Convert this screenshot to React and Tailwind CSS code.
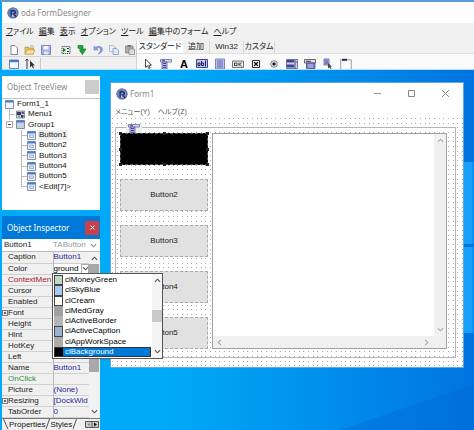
import React from "react";

const JP = "font-['Liberation_Sans','Noto_Sans_CJK_JP',sans-serif] [font-feature-settings:'palt']";

function Logo() {
  return (
    <svg viewBox="0 0 12 12" className="size-3 shrink-0" aria-hidden="true">
      <circle cx="6" cy="6" r="5.6" fill="#4a62a4" />
      <circle cx="6" cy="6" r="4.6" fill="#8292c6" />
      <path d="M1 4a5.5 5.5 0 0 1 9-2L6 3 4 6 3 10A5 5 0 0 1 1 4z" fill="#6c7eb6" />
      <path d="M4.2 9.500V3.800h2.200c2.600 0 2.600 2.900.3 3.100L9.200 9.800" fill="none" stroke="#1c2f68" strokeWidth="1.400" />
      <path d="M5.200 9.500V7.500l1.500 2z" fill="#e4e8f6" />
    </svg>
  );
}

function Chevron({ dir = "down", color = "#555" }) {
  const d = {
    down: "M1 2.5 4 5.5 7 2.5",
    up: "M1 5.5 4 2.5 7 5.5",
    left: "M5.5 1 2.5 4 5.5 7",
    right: "M2.5 1 5.5 4 2.5 7",
  }[dir];
  return (
    <svg viewBox="0 0 8 8" className="size-[7px] shrink-0" aria-hidden="true">
      <path d={d} fill="none" stroke={color} strokeWidth="1.3" />
    </svg>
  );
}

function Glyph({ name }) {
  const art = {
    page: <path d="M3 1.5h4l2.5 2.5v6.5H3z" fill="#fff" stroke="#667" strokeWidth=".8" />,
    folder: (
      <>
        <path d="M1 3h3l1 1h4.5v6H1z" fill="#e8c060" stroke="#a88432" strokeWidth=".6" />
        <path d="M1 10 3 6h8L9 10z" fill="#fbe09a" stroke="#b8923c" strokeWidth=".6" />
        <path d="M6 2q3-1.5 4 1.4" fill="none" stroke="#7a8cb0" strokeWidth=".7" />
      </>
    ),
    save: (
      <>
        <path d="M1.5 1.5h9v9h-9z" fill="#a3afe0" stroke="#6674b0" strokeWidth=".8" />
        <path d="M3.5 2h5v3.5h-5z" fill="#f4f6ff" />
        <path d="M4 7.5h4.5v3H4z" fill="#dfe3f3" />
      </>
    ),
    run: (
      <>
        <path d="M2 2.5h8v7H2z" fill="#e8f4e8" stroke="#445" strokeWidth=".9" strokeDasharray="1.4 .7" />
        <path d="M3 3.5 6 6 3 8.5z" fill="#168a2c" />
        <path d="M7 4h2v1H7zM7 7h2v1H7z" fill="#223" />
      </>
    ),
    green: <path d="M2 1.5h5v3.5h3L6.5 10.5 3.5 6.500H6L2 4z" fill="#19a93a" stroke="#0c6d24" strokeWidth=".6" />,
    undo: <path d="M2 2v4h4L4.600 4.500Q8.500 2.500 8.500 6q0 2.500-2.500 4.300Q11 8.500 10.500 5 9.500.8 3.500 3.300z" fill="#8b9fe2" stroke="#5f74c0" strokeWidth=".5" />,
    copy: (
      <>
        <path d="M1.500 1.500h4l1.500 1.500v4.500H1.500z" fill="#eef2fb" stroke="#9aacd2" strokeWidth=".8" />
        <path d="M5 4.500h3.500l2 2v4H5z" fill="#dfe7f8" stroke="#8298c8" strokeWidth=".8" />
      </>
    ),
    paste: (
      <>
        <path d="M1.500 2h7.500v7H1.500z" fill="#aaa" stroke="#888" strokeWidth=".8" />
        <path d="M3.500 1h3.500v2H3.500z" fill="#777" />
        <path d="M5 5h5.500v5.500H5z" fill="#ddd" stroke="#888" strokeWidth=".8" />
      </>
    ),
    form: (
      <>
        <path d="M1.500 2h9v8.500h-9z" fill="#f4f8ff" stroke="#5a78b8" strokeWidth=".9" />
        <path d="M1.500 2h9v2.200h-9z" fill="#4a78d0" />
      </>
    ),
    order: (
      <>
        <path d="M3 1v10M1.500 2.500 3 1l1.500 1.500" fill="none" stroke="#333" strokeWidth="1" />
        <path d="M6 2.500v7l1.800-1.700L9 10.500l1-.5-1.200-2.500H11z" fill="#333" />
      </>
    ),
    pointer: <path d="M3.500 1v8.500l2-1.800 1.300 2.800 1.300-.6L6.900 7.200h2.600z" fill="#fff" stroke="#333" strokeWidth=".9" />,
    menu: (
      <>
        <path d="M.5 1.500h11v2.500H.5z" fill="#d8dbf2" stroke="#55589a" strokeWidth=".7" />
        <path d="M2 4h5v7H2z" fill="#b4b8e6" stroke="#484b92" strokeWidth=".7" />
        <path d="M3 5.500h3M3 7.500h3M3 9.300h3M2 2.700h3" stroke="#24286e" strokeWidth=".8" />
      </>
    ),
    edit: (
      <>
        <path d="M.5 1.500h11v8H.5z" fill="#c4c8ee" stroke="#303378" strokeWidth=".9" />
        <path d="M2 7.500V5h2v2.500zM5.500 3v4.500h2V5h-2M9.500 2.500v6" fill="none" stroke="#181b58" strokeWidth="1" />
      </>
    ),
    memo: (
      <>
        <path d="M1.500 1h9v10h-9z" fill="#c0c3ec" stroke="#6a6da8" strokeWidth=".8" />
        <path d="M3 3h6M3 5h6M3 7h6M3 9h6" stroke="#5055a8" strokeWidth=".9" />
      </>
    ),
    ok: (
      <>
        <path d="M.5 3h11v6.500H.5z" fill="#e4e4e4" stroke="#555" strokeWidth=".8" />
        <path d="M2.500 5h2.500v2.500H2.500zM7 4.500v3.500M9.500 4.500 7.500 6.300l2 1.700" fill="none" stroke="#222" strokeWidth=".8" />
      </>
    ),
    check: (
      <>
        <path d="M2.500 2.500h7v7h-7z" fill="#fff" stroke="#333" strokeWidth="1" />
        <path d="m4 4 4 4M8 4 4 8" stroke="#111" strokeWidth="1.300" />
      </>
    ),
    radio: (
      <>
        <circle cx="6" cy="6" r="3.300" fill="#fff" stroke="#666" strokeWidth=".9" />
        <circle cx="6" cy="6" r="1.700" fill="#111" />
      </>
    ),
    list: (
      <>
        <path d="M.5 1.500h11v9H.5z" fill="#d2d4ee" stroke="#55589a" strokeWidth=".8" />
        <path d="M1 2h7v2.500H1zM1 6.500h7v3H1z" fill="#3e429c" />
        <path d="M9 2v8.500M9.500 4h1.500" stroke="#444" strokeWidth=".9" />
      </>
    ),
    combo: (
      <>
        <path d="M.5 1.500h11v3.500H.5z" fill="#e0e2f2" stroke="#444" strokeWidth=".8" />
        <path d="M2 3.300h5" stroke="#333" />
        <path d="M2.500 5h8.500v5.500H2.500z" fill="#7a7dc8" stroke="#444792" strokeWidth=".8" />
        <path d="M4 7h5M4 9h5" stroke="#e0e2f8" strokeWidth=".7" />
      </>
    ),
    popup: (
      <>
        <path d="M2 1h5v6H2z" fill="#b4b8e6" stroke="#55589a" strokeWidth=".8" />
        <path d="M3 3h3M3 5h3" stroke="#24286e" strokeWidth=".8" />
        <path d="M6 5v5.500l1.500-1.300 1 1.800 1-.5-1-1.900h1.500z" fill="#444" />
      </>
    ),
    group: (
      <>
        <path d="M.7 11V1.800h10.600V11" fill="none" stroke="#888" strokeWidth=".8" />
        <path d="M2 .8h5v2H2z" fill="#24286e" />
      </>
    ),
  }[name];
  return (
    <svg viewBox="0 0 12 12" className="size-3 shrink-0" aria-hidden="true">
      {art}
    </svg>
  );
}

function IconButton({ name, label }) {
  return (
    <button aria-label={label} className="flex w-4 shrink-0 items-center justify-center">
      <Glyph name={name} />
    </button>
  );
}

const menus = ["ファイル", "編集", "表示", "オプション", "ツール", "編集中のフォーム", "ヘルプ"];
const palette = ["pointer", "menu", "A", "edit", "memo", "ok", "check", "radio", "list", "combo", "popup", "group"];

function MainWindow() {
  return (
    <header className="absolute top-[2px] right-0 left-[2px] border-b border-[#b8e0f4] bg-[#f0f0f0]">
      <div className="flex h-[21px] items-center gap-[2px] bg-white pl-[5px]">
        <Logo />
        <h1 className="font-['Noto_Sans',sans-serif] text-[8px] text-[#888]">oda FormDesigner</h1>
      </div>
      <nav className={`flex h-[18px] items-center gap-[5px] pl-1 text-[8px] leading-[10px] text-[#222] ${JP}`}>
        {menus.map((m) => (
          <button key={m} className="whitespace-nowrap">
            <span className="underline">{m[0]}</span>
            {m.slice(1)}
          </button>
        ))}
      </nav>
      <div className="flex h-7 overflow-hidden">
        <div className="flex w-[135px] shrink-0 flex-col border-r border-[#d0d0d0] pt-[3px]">
          <div className="flex h-4 items-center border-b border-[#d4d4d4] pl-1">
            <IconButton name="page" label="新規" />
            <IconButton name="folder" label="開く" />
            <IconButton name="save" label="保存" />
            <span className="mr-px ml-[3px] h-3 w-px bg-[#c8c8c8]" />
            <IconButton name="run" label="実行" />
            <IconButton name="green" label="追加" />
            <IconButton name="undo" label="元に戻す" />
            <IconButton name="copy" label="コピー" />
            <IconButton name="paste" label="貼り付け" />
          </div>
          <div className="flex items-center pt-px pl-1">
            <IconButton name="form" label="フォーム" />
            <IconButton name="order" label="順序" />
            <span className="ml-[2px] h-3 w-px bg-[#c8c8c8]" />
          </div>
        </div>
        <div className="flex min-w-0 flex-1 flex-col">
          <div role="tablist" className={`flex h-3 text-[8px] leading-[12px] text-[#222] ${JP}`}>
            <button role="tab" aria-selected="true" className="w-[46px] bg-white whitespace-nowrap">スタンダード</button>
            <button role="tab" className="w-[27px] border-r border-[#d8d8d8]">追加</button>
            <button role="tab" className="w-[34px] border-r border-[#d8d8d8]">Win32</button>
            <button role="tab" className="w-[31px] border-r border-[#d8d8d8] whitespace-nowrap">カスタム</button>
          </div>
          <div className="flex h-4 items-center gap-[2px] border-t border-[#e0e0e0] bg-[#fafafa] pt-[4px] pl-[3px]">
            {palette.map((p) =>
              p === "A" ? (
                <button key={p} className="w-4 shrink-0 font-['Liberation_Sans',sans-serif] text-[11px] leading-3 font-bold text-black">A</button>
              ) : (
                <IconButton key={p} name={p} label={p} />
              ),
            )}
          </div>
        </div>
      </div>
    </header>
  );
}

function NodeIcon({ kind }) {
  return (
    <svg viewBox="0 0 9 9" className="size-[9px] shrink-0" aria-hidden="true">
      {kind === "menu" ? (
        <>
          <path d="M.5 1h8v7h-8z" fill="#d0d4e4" stroke="#777" strokeWidth=".8" />
          <path d="M1 2h4v3H1zM5 5h2.500v2.500H5z" fill="#343a70" />
          <path d="M6 2h1.500v1.500H6zM2 6h2" fill="#c44" stroke="#333" strokeWidth=".6" />
        </>
      ) : (
        <>
          <path d="M.5.5h8v8h-8z" fill={kind === "group" ? "#ccd0d8" : "#f2f6fc"} stroke="#7286a8" strokeWidth=".9" />
          <path d="M.5.5h8v2h-8z" fill="#4a7bcc" />
          {kind === "button" && <path d="M2.500 4h4v2.500h-4z" fill="#dfe6f2" stroke="#8896b4" strokeWidth=".7" />}
        </>
      )}
    </svg>
  );
}

const children = ["Button1", "Button2", "Button3", "Button4", "Button5", "<Edit[7]>"];

function TreeView() {
  return (
    <section className="absolute top-[76px] left-[2px] w-[98px] bg-white pb-[18px] font-['Liberation_Sans',sans-serif] text-[#111]">
      <div className="flex h-[23px] items-center justify-between border-b border-[#c4c4c4] pr-px pl-[5px]">
        <h2 className="font-['Noto_Sans',sans-serif] text-[8px] text-[#888]">Object TreeView</h2>
        <button aria-label="閉じる" className="size-[14px] bg-[#ccc]" />
      </div>
      <ul className="grid h-[93px] auto-rows-fr text-[8px] leading-[10px]">
        <li className="flex items-center gap-[3px] pl-[3px]"><NodeIcon kind="form" />Form1_1</li>
        <li className="flex items-center pl-[7px]">
          <span className="h-full w-px bg-[#bbb]" />
          <span className="mr-px h-px w-[5px] bg-[#bbb]" />
          <NodeIcon kind="menu" />
          <span className="ml-[3px]">Menu1</span>
        </li>
        <li className="flex items-center gap-[3px] pl-1">
          <svg viewBox="0 0 7 7" className="size-[7px]" aria-hidden="true">
            <path d="M.5.5h6v6h-6z" fill="#fff" stroke="#aaa" />
            <path d="M2 3.500h3" stroke="#444" />
          </svg>
          <NodeIcon kind="group" />Group1
        </li>
        {children.map((c, i) => (
          <li key={c} className="flex items-center pl-[19px]">
            <span className={i === 5 ? "h-1/2 w-px self-start bg-[#bbb]" : "h-full w-px bg-[#bbb]"} />
            <span className="h-px w-[5px] bg-[#bbb]" />
            <NodeIcon kind="button" />
            <span className={i === 0 ? "ml-[2px] bg-[#eee] px-px" : "ml-[2px] px-px"}>{c}</span>
          </li>
        ))}
      </ul>
    </section>
  );
}

const swatches = [
  ["clMoneyGreen", "border border-[#444] bg-[#c0dcc0]"],
  ["clSkyBlue", "border border-[#444] bg-[#a6caf0]"],
  ["clCream", "border border-[#444] bg-[#fffbf0]"],
  ["clMedGray", "bg-[#a0a0a4]"],
  ["clActiveBorder", "bg-[#b4b4b4]"],
  ["clActiveCaption", "border border-[#444] bg-[#99b4d1]"],
  ["clAppWorkSpace", "bg-[#ababab]"],
  ["clBackground", "bg-black"],
];

function ColorList() {
  return (
    <div className="absolute top-[57px] left-[50px] z-10 flex h-[86px] w-[111px] border border-[#555] bg-white text-black">
      <ul role="listbox" aria-label="Color" className="grid flex-1 auto-rows-fr p-px">
        {swatches.map(([name, fill]) => (
          <li
            key={name}
            role="option"
            aria-selected={name === "clBackground"}
            className={name === "clBackground" ? "flex items-center gap-[2px] bg-[#0078d7] text-white outline-1 -outline-offset-1 outline-[#333]" : "flex items-center gap-[2px]"}
          >
            <span className={`h-full w-[9px] ${fill}`} />
            {name}
          </li>
        ))}
      </ul>
      <div className="flex w-[10px] flex-col items-center justify-between bg-[#f4f4f4] py-[3px]">
        <Chevron dir="up" />
        <span className="h-3 w-[10px] bg-[#c8c8c8]" />
        <Chevron />
      </div>
    </div>
  );
}

const props = [
  ["Caption", "Button1"],
  ["Color", "ground"],
  ["ContextMen", ""],
  ["Cursor", ""],
  ["Enabled", ""],
  ["Font", ""],
  ["Height", ""],
  ["Hint", ""],
  ["HotKey", ""],
  ["Left", ""],
  ["Name", "Button1"],
  ["OnClick", ""],
  ["Picture", "(None)"],
  ["Resizing", "[DockWid"],
  ["TabOrder", "0"],
];

function nameColor(name) {
  if (name === "ContextMen") return "text-[#a01830]";
  if (name === "OnClick") return "text-[#2f9040]";
  return "text-[#222]";
}

function Inspector() {
  return (
    <section className="absolute top-[216px] left-[2px] w-[98px] bg-[#f0f0f0] font-['Liberation_Sans',sans-serif] text-[8px] leading-[10px]">
      <div className="flex h-[23px] items-center justify-between bg-[#0078d7] pr-px pl-[5px]">
        <h2 className="font-['Noto_Sans',sans-serif] text-[8px] text-white">Object Inspector</h2>
        <button aria-label="閉じる" className="flex size-[14px] items-center justify-center bg-[#c84048]">
          <svg viewBox="0 0 5 5" className="size-[5px]" aria-hidden="true"><path d="m.5.5 4 4M4.500.5l-4 4" stroke="#fff" /></svg>
        </button>
      </div>
      <div className="flex h-[13px] items-center border-b border-[#bbb] bg-white pr-[3px] pl-[2px]">
        <select aria-label="オブジェクト" className="w-[49px] appearance-none text-[#222]">
          <option>Button1</option>
        </select>
        <span className="flex-1 text-[#999]">TAButton</span>
        <Chevron color="#888" />
      </div>
      <div className="flex">
        <table className="w-[87px] table-fixed border-collapse">
          <tbody>
            {props.map(([name, value]) => (
              <tr key={name} className="h-[11px] border-b border-[#d0d0d0]">
                <th className={`w-[51px] border-r border-[#bbb] p-0 text-left font-normal ${nameColor(name)}`}>
                  <div className="flex h-[10px] items-center whitespace-nowrap">
                    <span className="flex w-[6px] shrink-0">
                      {(name === "Font" || name === "Resizing") && (
                        <svg viewBox="0 0 7 7" className="size-[6px]" aria-hidden="true">
                          <path d="M.5.5h6v6h-6z" fill="#fff" stroke="#555" />
                          <path d="M2 3.500h3M3.500 2v3" stroke="#222" />
                        </svg>
                      )}
                    </span>
                    {name}
                  </div>
                </th>
                <td className="p-0 text-[#28289a]">
                  {name === "Color" ? (
                    <div className="flex h-[10px] items-center justify-between bg-white">
                      <input aria-label="Color" defaultValue={value} className="w-[27px] bg-white text-black" />
                      <span className="flex h-full w-2 items-center justify-center border border-[#aaa]"><Chevron /></span>
                    </div>
                  ) : (
                    <div className="h-[10px] whitespace-nowrap">{value}</div>
                  )}
                </td>
              </tr>
            ))}
          </tbody>
        </table>
        <div className="flex w-[10px] flex-col items-center justify-between bg-[#f2f2f2] py-[3px]">
          <Chevron dir="up" />
          <span className="mt-[2px] mb-auto h-[108px] w-[10px] bg-[#a8a8a8]" />
          <Chevron />
        </div>
      </div>
      <div className="flex h-[13px] items-center border-t border-[#777]">
        <svg viewBox="0 0 7 12" className="h-3 w-[7px]" aria-hidden="true"><path d="M1.500 0 6 10" stroke="#444" strokeWidth=".9" /></svg>
        <button className="text-[#111]">Properties</button>
        <svg viewBox="0 0 5 12" className="h-3 w-[5px]" aria-hidden="true"><path d="M4.500 0 1 10" stroke="#444" strokeWidth=".9" /></svg>
        <button className="text-[#111]">Styles</button>
        <svg viewBox="0 0 5 12" className="h-3 w-[5px]" aria-hidden="true"><path d="M4.500 0 1 10" stroke="#444" strokeWidth=".9" /></svg>
        <svg viewBox="0 0 14 7" className="mr-px ml-auto h-[7px] w-[14px] shrink-0" aria-hidden="true">
          <path d="M.5.5h13v6H.5zM7 0v7" fill="#ccc" stroke="#555" />
          <path d="M4.500 2v3L3 3.500z" fill="#666" />
          <path d="M9 1.500v4l3-2z" fill="#111" />
        </svg>
      </div>
      <ColorList />
    </section>
  );
}

function DotGrid() {
  return (
    <svg className="absolute inset-0 size-full" aria-hidden="true">
      <defs>
        <pattern id="dots" width="14" height="14" patternUnits="userSpaceOnUse">
          <path
            d="M1 1h1v1H1zM6 1h1v1H6zM10 1h1v1h-1zM1 6h1v1H1zM6 6h1v1H6zM10 6h1v1h-1zM1 10h1v1H1zM6 10h1v1H6zM10 10h1v1h-1z"
            fill="#aaa"
          />
        </pattern>
      </defs>
      <rect width="100%" height="100%" fill="url(#dots)" />
    </svg>
  );
}

function Handle({ at }) {
  return <span className={`absolute size-[3px] bg-[#222] ${at}`} />;
}

function FormWindow() {
  return (
    <main className="absolute top-[82px] right-[10px] left-[110px] border border-[#5ca8e0] bg-white">
      <div className="flex h-[21px] items-center gap-[2px] pr-[14px] pl-[5px]">
        <Logo />
        <h2 className="flex-1 font-['Noto_Sans',sans-serif] text-[8px] text-[#888]">Form1</h2>
        <div className="flex items-center gap-[27px]">
          <button aria-label="最小化"><svg viewBox="0 0 7 7" className="size-[7px]"><path d="M0 3.500h7" stroke="#999" /></svg></button>
          <button aria-label="最大化"><svg viewBox="0 0 7 7" className="size-[7px]"><path d="M.5.5h6v6h-6z" fill="none" stroke="#888" /></svg></button>
          <button aria-label="閉じる"><svg viewBox="0 0 7 7" className="size-[7px]"><path d="m0 0 7 7M7 0 0 7" stroke="#888" /></svg></button>
        </div>
      </div>
      <nav className={`flex h-[13px] items-end gap-2 pl-1 text-[7px] leading-[11px] text-[#555] ${JP}`}>
        <button>メニュー(Y)</button>
        <button>ヘルプ(Z)</button>
      </nav>
      <div className="relative pt-[10px] pr-[7px] pb-[9px] pl-1">
        <DotGrid />
        <div className="relative flex gap-1 border border-[#b4b4b4] pt-[5px] pr-2 pb-2 pl-1">
          <span className="absolute -top-1 left-[10px] flex h-[10px] w-4 items-center justify-center overflow-hidden bg-[#eee]"><Glyph name="menu" /></span>
          <div className="flex w-[88px] shrink-0 flex-col gap-[14px] font-['Liberation_Sans',sans-serif] text-[8px] text-[#222]">
            <button aria-label="Button1" className="relative h-8 border border-dashed border-[#555] bg-black">
              <Handle at="-top-[2px] -left-[2px]" />
              <Handle at="-top-[2px] left-[42px]" />
              <Handle at="-top-[2px] -right-[2px]" />
              <Handle at="top-[14px] -left-[2px]" />
              <Handle at="top-[14px] -right-[2px]" />
              <Handle at="-bottom-[2px] -left-[2px]" />
              <Handle at="-bottom-[2px] left-[42px]" />
              <Handle at="-bottom-[2px] -right-[2px]" />
            </button>
            <button className="h-8 border border-dashed border-[#aaa] bg-[#e1e1e1]">Button2</button>
            <button className="h-8 border border-dashed border-[#aaa] bg-[#e1e1e1]">Button3</button>
            <button className="h-8 border border-dashed border-[#aaa] bg-[#e1e1e1]">Button4</button>
            <button className="h-8 border border-dashed border-[#aaa] bg-[#e1e1e1]">Button5</button>
          </div>
          <div className="flex min-w-0 flex-1 flex-col border border-[#a0a0a0] bg-white">
            <div className="flex flex-1">
              <textarea aria-label="Edit" className="min-w-0 flex-1 resize-none bg-white" />
              <div className="flex w-3 flex-col items-center justify-between bg-[#f0f0f0] py-[3px]">
                <Chevron dir="up" color="#aaa" />
                <Chevron color="#aaa" />
              </div>
            </div>
            <div className="flex h-3 items-center justify-between bg-[#f0f0f0] pr-4 pl-[3px]">
              <Chevron dir="left" color="#aaa" />
              <Chevron dir="right" color="#aaa" />
            </div>
          </div>
        </div>
      </div>
    </main>
  );
}

export default function App() {
  return (
    <div className="relative h-screen min-h-[430px] w-full overflow-hidden border-t-2 border-[#5b9bd5] bg-linear-to-r from-[#00aaf8] from-35% to-[#0074e0]">
      <div className="absolute -top-[2px] left-0 h-[432px] w-full">
        <div className="absolute top-[162px] right-0 flex w-[10px] flex-col gap-[3px]">
          <div className="h-[82px] border-r-2 border-[#1090f0] bg-[#18a0f8]" />
          <div className="h-[86px] border-r-2 border-[#1090f0] bg-[#18a0f8]" />
        </div>
        <div className="absolute right-0 bottom-0 h-12 w-[140px] bg-[#0068d4]/40 [clip-path:polygon(0_100%,100%_0,100%_100%)]" />
        <MainWindow />
        <TreeView />
        <FormWindow />
        <Inspector />
      </div>
    </div>
  );
}
